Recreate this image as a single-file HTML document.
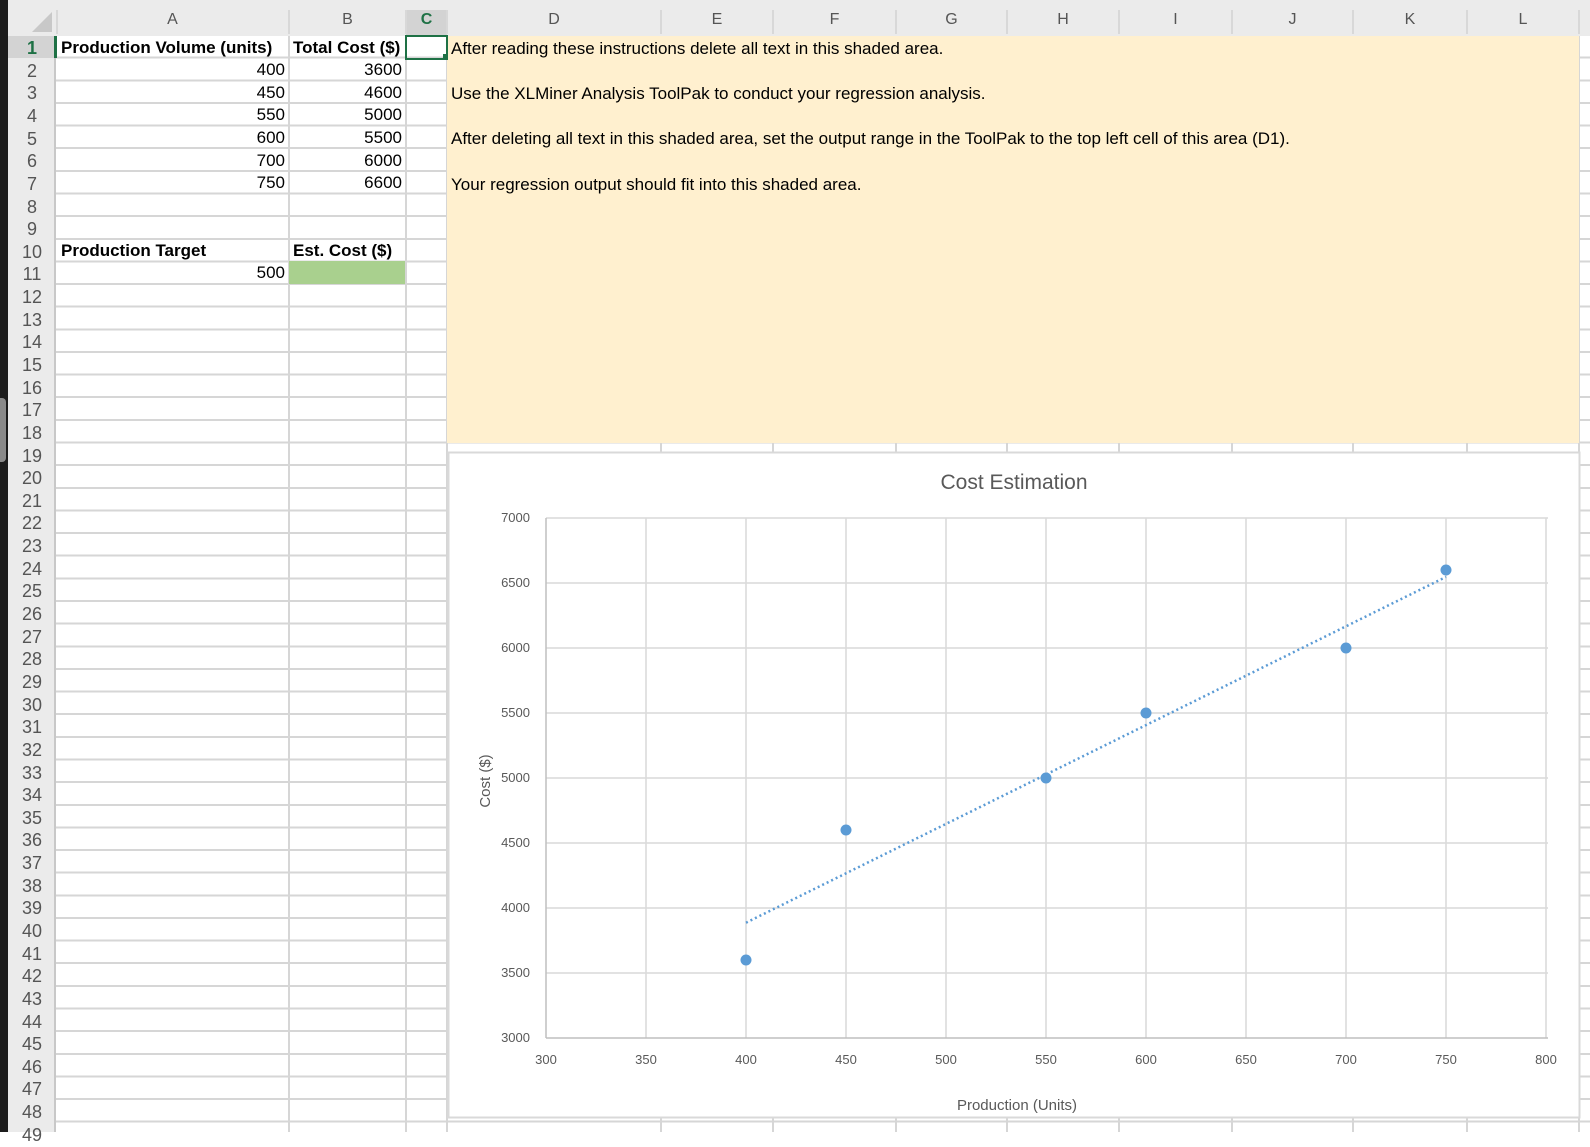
<!DOCTYPE html>
<html><head><meta charset="utf-8"><style>
body{margin:0;width:1590px;height:1132px;overflow:hidden;background:#fff;font-family:"Liberation Sans",Arial,sans-serif;position:relative}
.a{position:absolute}
#grid{left:56px;top:36px;width:1534px;height:1096px;background:repeating-linear-gradient(to bottom,transparent 0,transparent 20.64px,#d6d6d6 20.64px,#d6d6d6 22.64px)}
.v{position:absolute;top:36px;width:2px;height:1096px;background:#d6d6d6}
#hdr{left:8px;top:0;width:1582px;height:36px;background:#ebebeb}
.ch{position:absolute;top:0;height:36px;line-height:40px;text-align:center;color:#555;font-size:16px}
.cs{position:absolute;top:10px;width:2px;height:24px;background:#d8d8d8}
#rh{left:8px;top:36px;width:48px;height:1096px;background:#ebebeb;border-right:2px solid #c8c8c8;box-sizing:border-box}
.rn{position:absolute;left:8px;width:48px;text-align:center;color:#555;font-size:18px;height:22.64px;line-height:24px}
.t{position:absolute;font-size:17px;color:#000;white-space:nowrap;line-height:22px}
.b{font-weight:bold}
.r{text-align:right}
</style></head><body>
<div class="a" id="grid"></div>
<div class="v" style="left:288px"></div><div class="v" style="left:405px"></div><div class="v" style="left:446px"></div>
<div class="v" style="left:660px"></div><div class="v" style="left:772px"></div><div class="v" style="left:895px"></div><div class="v" style="left:1006px"></div><div class="v" style="left:1118px"></div><div class="v" style="left:1231px"></div><div class="v" style="left:1352px"></div><div class="v" style="left:1466px"></div><div class="v" style="left:1578px"></div>
<div class="a" style="left:447px;top:36px;width:1132px;height:407px;background:#fff0cf"></div>
<div class="a" style="left:289px;top:261px;width:116px;height:23px;background:#a9d08e"></div>
<div class="a" style="left:0;top:0;width:8px;height:1132px;background:#1c1c1c"></div>
<div class="a" style="left:0;top:398px;width:6px;height:64px;background:#8a8a8a;border-radius:0 4px 4px 0"></div>
<div class="a" id="hdr"></div>
<div class="a" style="left:406px;top:10px;width:41px;height:26px;background:#d3d3d3"></div>
<svg class="a" style="left:30px;top:12px" width="24" height="22"><polygon points="22,0 22,20 2,20" fill="#c8c8c8"/></svg>
<div class="cs" style="left:56px"></div><div class="cs" style="left:288px"></div><div class="cs" style="left:405px"></div><div class="cs" style="left:446px"></div><div class="cs" style="left:660px"></div><div class="cs" style="left:772px"></div><div class="cs" style="left:895px"></div><div class="cs" style="left:1006px"></div><div class="cs" style="left:1118px"></div><div class="cs" style="left:1231px"></div><div class="cs" style="left:1352px"></div><div class="cs" style="left:1466px"></div><div class="cs" style="left:1578px"></div>
<div class="ch" style="left:56px;width:233px">A</div><div class="ch" style="left:289px;width:117px">B</div><div class="ch" style="left:406px;width:41px;color:#1e7145;font-weight:bold">C</div><div class="ch" style="left:447px;width:214px">D</div><div class="ch" style="left:661px;width:112px">E</div><div class="ch" style="left:773px;width:123px">F</div><div class="ch" style="left:896px;width:111px">G</div><div class="ch" style="left:1007px;width:112px">H</div><div class="ch" style="left:1119px;width:113px">I</div><div class="ch" style="left:1232px;width:121px">J</div><div class="ch" style="left:1353px;width:114px">K</div><div class="ch" style="left:1467px;width:112px">L</div>
<div class="a" id="rh"></div>
<div class="a" style="left:8px;top:36px;width:48px;height:22px;background:#d3d3d3"></div>
<div class="a" style="left:54px;top:36px;width:3px;height:22px;background:#1e7145"></div>
<div class="rn" style="top:36px;color:#1e7145;font-weight:bold">1</div><div class="rn" style="top:58.6px">2</div><div class="rn" style="top:81.3px">3</div><div class="rn" style="top:103.9px">4</div><div class="rn" style="top:126.6px">5</div><div class="rn" style="top:149.2px">6</div><div class="rn" style="top:171.8px">7</div><div class="rn" style="top:194.5px">8</div><div class="rn" style="top:217.1px">9</div><div class="rn" style="top:239.8px">10</div><div class="rn" style="top:262.4px">11</div><div class="rn" style="top:285px">12</div><div class="rn" style="top:307.7px">13</div><div class="rn" style="top:330.3px">14</div><div class="rn" style="top:353px">15</div><div class="rn" style="top:375.6px">16</div><div class="rn" style="top:398.2px">17</div><div class="rn" style="top:420.9px">18</div><div class="rn" style="top:443.5px">19</div><div class="rn" style="top:466.2px">20</div><div class="rn" style="top:488.8px">21</div><div class="rn" style="top:511.4px">22</div><div class="rn" style="top:534.1px">23</div><div class="rn" style="top:556.7px">24</div><div class="rn" style="top:579.4px">25</div><div class="rn" style="top:602px">26</div><div class="rn" style="top:624.6px">27</div><div class="rn" style="top:647.3px">28</div><div class="rn" style="top:669.9px">29</div><div class="rn" style="top:692.6px">30</div><div class="rn" style="top:715.2px">31</div><div class="rn" style="top:737.8px">32</div><div class="rn" style="top:760.5px">33</div><div class="rn" style="top:783.1px">34</div><div class="rn" style="top:805.8px">35</div><div class="rn" style="top:828.4px">36</div><div class="rn" style="top:851px">37</div><div class="rn" style="top:873.7px">38</div><div class="rn" style="top:896.3px">39</div><div class="rn" style="top:919px">40</div><div class="rn" style="top:941.6px">41</div><div class="rn" style="top:964.2px">42</div><div class="rn" style="top:986.9px">43</div><div class="rn" style="top:1009.5px">44</div><div class="rn" style="top:1032.2px">45</div><div class="rn" style="top:1054.8px">46</div><div class="rn" style="top:1077.4px">47</div><div class="rn" style="top:1100.1px">48</div><div class="rn" style="top:1122.7px">49</div>
<div class="t b" style="left:61px;top:37px">Production Volume (units)</div>
<div class="t b" style="left:293px;top:37px">Total Cost ($)</div>
<div class="t r" style="left:200px;width:85px;top:59px">400</div><div class="t r" style="left:300px;width:102px;top:59px">3600</div>
<div class="t r" style="left:200px;width:85px;top:82px">450</div><div class="t r" style="left:300px;width:102px;top:82px">4600</div>
<div class="t r" style="left:200px;width:85px;top:104px">550</div><div class="t r" style="left:300px;width:102px;top:104px">5000</div>
<div class="t r" style="left:200px;width:85px;top:127px">600</div><div class="t r" style="left:300px;width:102px;top:127px">5500</div>
<div class="t r" style="left:200px;width:85px;top:150px">700</div><div class="t r" style="left:300px;width:102px;top:150px">6000</div>
<div class="t r" style="left:200px;width:85px;top:172px">750</div><div class="t r" style="left:300px;width:102px;top:172px">6600</div>
<div class="t b" style="left:61px;top:240px">Production Target</div>
<div class="t b" style="left:293px;top:240px">Est. Cost ($)</div>
<div class="t r" style="left:200px;width:85px;top:262px">500</div>
<div class="a" style="left:405px;top:35px;width:39px;height:21px;border:2px solid #1e7145"></div>
<div class="a" style="left:443px;top:54px;width:5px;height:5px;background:#1e7145"></div>
<div class="t" style="left:451px;top:38px">After reading these instructions delete all text in this shaded area.</div>
<div class="t" style="left:451px;top:83px">Use the XLMiner Analysis ToolPak to conduct your regression analysis.</div>
<div class="t" style="left:451px;top:128px">After deleting all text in this shaded area, set the output range in the ToolPak to the top left cell of this area (D1).</div>
<div class="t" style="left:451px;top:174px">Your regression output should fit into this shaded area.</div>
<svg class="a" style="left:0;top:0" width="1590" height="1132" font-family="Liberation Sans,sans-serif">
<rect x="448.5" y="452.5" width="1131" height="665" fill="#fff" stroke="#d9d9d9" stroke-width="2"/>
<g stroke="#d9d9d9" stroke-width="1.5">
<line x1="546" y1="518" x2="1548" y2="518"/><line x1="546" y1="583" x2="1548" y2="583"/><line x1="546" y1="648" x2="1548" y2="648"/><line x1="546" y1="713" x2="1548" y2="713"/><line x1="546" y1="778" x2="1548" y2="778"/><line x1="546" y1="843" x2="1548" y2="843"/><line x1="546" y1="908" x2="1548" y2="908"/><line x1="546" y1="973" x2="1548" y2="973"/>
<line x1="646" y1="518" x2="646" y2="1038"/><line x1="746" y1="518" x2="746" y2="1038"/><line x1="846" y1="518" x2="846" y2="1038"/><line x1="946" y1="518" x2="946" y2="1038"/><line x1="1046" y1="518" x2="1046" y2="1038"/><line x1="1146" y1="518" x2="1146" y2="1038"/><line x1="1246" y1="518" x2="1246" y2="1038"/><line x1="1346" y1="518" x2="1346" y2="1038"/><line x1="1446" y1="518" x2="1446" y2="1038"/><line x1="1546" y1="518" x2="1546" y2="1038"/>
</g>
<g stroke="#bfbfbf" stroke-width="1.5"><line x1="546" y1="518" x2="546" y2="1038"/><line x1="546" y1="1038" x2="1548" y2="1038"/></g>
<text x="1014" y="489" font-size="21" fill="#595959" text-anchor="middle">Cost Estimation</text>
<g font-size="13" fill="#595959" text-anchor="end">
<text x="530" y="522">7000</text><text x="530" y="587">6500</text><text x="530" y="652">6000</text><text x="530" y="717">5500</text><text x="530" y="782">5000</text><text x="530" y="847">4500</text><text x="530" y="912">4000</text><text x="530" y="977">3500</text><text x="530" y="1042">3000</text>
</g>
<g font-size="13" fill="#595959" text-anchor="middle">
<text x="546" y="1064">300</text><text x="646" y="1064">350</text><text x="746" y="1064">400</text><text x="846" y="1064">450</text><text x="946" y="1064">500</text><text x="1046" y="1064">550</text><text x="1146" y="1064">600</text><text x="1246" y="1064">650</text><text x="1346" y="1064">700</text><text x="1446" y="1064">750</text><text x="1546" y="1064">800</text>
</g>
<text x="1017" y="1110" font-size="15" fill="#595959" text-anchor="middle">Production (Units)</text>
<text transform="translate(490,781) rotate(-90)" font-size="15" fill="#595959" text-anchor="middle">Cost ($)</text>
<line x1="746" y1="922.7" x2="1446" y2="576.9" stroke="#5b9bd5" stroke-width="2.5" stroke-dasharray="2,3"/>
<g fill="#5b9bd5"><circle cx="746" cy="960" r="5.5"/><circle cx="846" cy="830" r="5.5"/><circle cx="1046" cy="778" r="5.5"/><circle cx="1146" cy="713" r="5.5"/><circle cx="1346" cy="648" r="5.5"/><circle cx="1446" cy="570" r="5.5"/></g>
</svg>
</body></html>
